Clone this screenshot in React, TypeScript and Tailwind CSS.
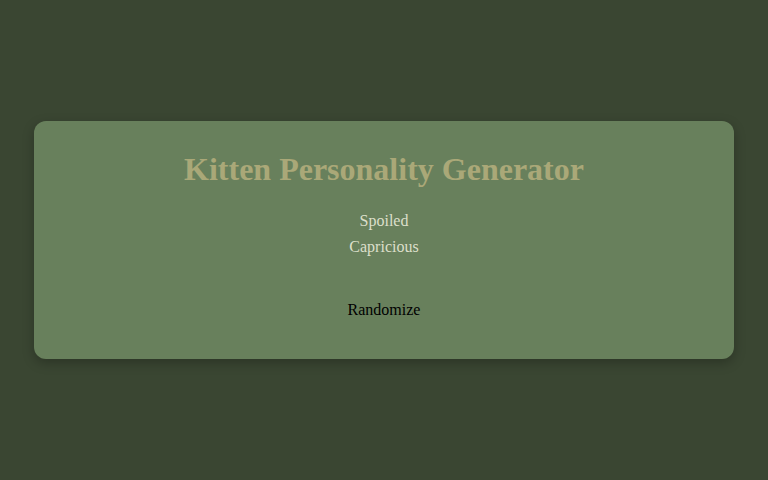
import React, { useState } from "react";

const traits = [
  "Spoiled",
  "Capricious",
  "Playful",
  "Curious",
  "Sleepy",
  "Mischievous",
  "Affectionate",
  "Shy",
];

function pickTwo(): [string, string] {
  const a = Math.floor(Math.random() * traits.length);
  let b = Math.floor(Math.random() * (traits.length - 1));
  if (b >= a) b += 1;
  return [traits[a], traits[b]];
}

export default function App() {
  const [pair, setPair] = useState<[string, string]>(["Spoiled", "Capricious"]);

  return (
    <div className="flex h-[480px] w-full items-center justify-center bg-[#3a4632] font-['Liberation_Serif',serif]">
      <div className="flex w-[700px] flex-col items-center rounded-xl bg-[#68805c] pt-[30px] pb-[37px] shadow-[0_4px_12px_rgba(0,0,0,0.25)]">
        <h1 className="text-[32px] leading-[37px] font-bold text-[#aaa878]">
          Kitten Personality Generator
        </h1>
        <div className="mt-[21px] flex flex-col items-center gap-[2px] text-base leading-6 text-[#dcdfca]">
          <p>{pair[0]}</p>
          <p>{pair[1]}</p>
        </div>
        <button
          className="mt-[39px] text-base leading-6 text-black"
          onClick={() => setPair(pickTwo())}
        >
          Randomize
        </button>
      </div>
    </div>
  );
}
